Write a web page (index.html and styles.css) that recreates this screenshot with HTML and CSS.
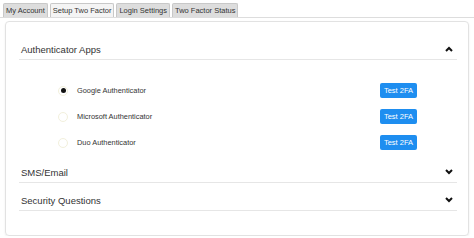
FILE: index.html
```html
<!DOCTYPE html>
<html lang="en">
<head>
  <meta charset="UTF-8">
  <title>Two Factor Setup</title>
  <link rel="stylesheet" href="styles.css">
</head>
<body>
  <div class="tabs">
    <div class="tab">My Account</div>
    <div class="tab active">Setup Two Factor</div>
    <div class="tab">Login Settings</div>
    <div class="tab">Two Factor Status</div>
  </div>

  <div class="card">
    <div class="section open">
      <div class="section-head">
        <span>Authenticator Apps</span>
        <svg class="chev" width="8" height="6" viewBox="0 0 8 6"><polyline points="1,5 4,2 7,5" fill="none" stroke="#111" stroke-width="2"/></svg>
      </div>
      <div class="apps">
        <div class="app">
          <span class="radio checked"></span>
          <span class="app-name">Google Authenticator</span>
          <button class="btn-test">Test 2FA</button>
        </div>
        <div class="app">
          <span class="radio"></span>
          <span class="app-name">Microsoft Authenticator</span>
          <button class="btn-test">Test 2FA</button>
        </div>
        <div class="app">
          <span class="radio"></span>
          <span class="app-name">Duo Authenticator</span>
          <button class="btn-test">Test 2FA</button>
        </div>
      </div>
    </div>
    <div class="section">
      <div class="section-head">
        <span>SMS/Email</span>
        <svg class="chev" width="8" height="6" viewBox="0 0 8 6"><polyline points="1,1 4,4 7,1" fill="none" stroke="#111" stroke-width="2"/></svg>
      </div>
    </div>
    <div class="section">
      <div class="section-head">
        <span>Security Questions</span>
        <svg class="chev" width="8" height="6" viewBox="0 0 8 6"><polyline points="1,1 4,4 7,1" fill="none" stroke="#111" stroke-width="2"/></svg>
      </div>
    </div>
  </div>
</body>
</html>
```

FILE: styles.css
```css
body {
  margin: 0;
  font-family: "Liberation Sans", Arial, sans-serif;
  color: #222;
  background-color: #fff;
}

.tabs {
  display: flex;
  gap: 2px;
  padding: 3px 0 0 3px;
  border-bottom: 1px solid #ddd;
}

.tab {
  height: 13px;
  line-height: 13px;
  padding: 0 2px;
  font-size: 7.5px;
  color: #333;
  background-color: #ddd;
  border: 1px solid #c8c8c8;
  border-bottom: none;
  border-radius: 2px 2px 0 0;
}

.tab.active {
  background-color: #f4f4f4;
}

.card {
  margin: 3px 0 0 5px;
  width: 438px;
  height: 177px;
  padding: 17px 11px 19px 13px;
  border: 1px solid #e2e2e2;
  border-radius: 4px;
  box-shadow: 0 1px 2px rgba(0, 0, 0, 0.08);
}

.section-head {
  display: flex;
  justify-content: space-between;
  align-items: center;
  height: 20px;
  padding: 0 4px 0 2px;
  font-size: 9.5px;
  color: #333;
  border-bottom: 1px solid #e6e6e6;
}

.section + .section .section-head {
  margin-top: 7px;
}

.apps {
  display: flex;
  flex-direction: column;
  gap: 11px;
  padding: 23px 40px 5px 39px;
}

.app {
  display: flex;
  align-items: center;
  height: 15px;
  font-size: 7.4px;
  color: #333;
}

.radio {
  width: 8px;
  height: 8px;
  border: 1px solid #f2f0dc;
  border-radius: 50%;
  margin-right: 9px;
  display: flex;
  align-items: center;
  justify-content: center;
}

.radio.checked::after {
  content: "";
  width: 5px;
  height: 5px;
  border-radius: 50%;
  background-color: #111;
}

.app-name {
  flex: 1;
}

.btn-test {
  width: 37px;
  height: 15px;
  padding: 0;
  font-family: inherit;
  font-size: 7.5px;
  color: #fff;
  background-color: #1e8ef0;
  border: none;
  border-radius: 2px;
}
```
